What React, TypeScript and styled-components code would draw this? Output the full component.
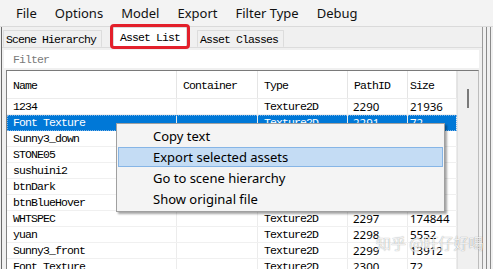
import React from 'react';
import styled, {createGlobalStyle} from "styled-components";

type Asset = {
    name: string;
    type: string;
    pathId: string;
    size: string;
}

const assets: Asset[] = [
    {name: '1234', type: 'Texture2D', pathId: '2290', size: '21936'},
    {name: 'Font Texture', type: 'Texture2D', pathId: '2291', size: '72'},
    {name: 'Sunny3_down', type: 'Texture2D', pathId: '2292', size: '72'},
    {name: 'STONE05', type: 'Texture2D', pathId: '2293', size: '43724'},
    {name: 'sushuini2', type: 'Texture2D', pathId: '2294', size: '87448'},
    {name: 'btnDark', type: 'Texture2D', pathId: '2295', size: '72'},
    {name: 'btnBlueHover', type: 'Texture2D', pathId: '2296', size: '72'},
    {name: 'WHTSPEC', type: 'Texture2D', pathId: '2297', size: '174844'},
    {name: 'yuan', type: 'Texture2D', pathId: '2298', size: '5552'},
    {name: 'Sunny3_front', type: 'Texture2D', pathId: '2299', size: '13912'},
    {name: 'Font Texture', type: 'Texture2D', pathId: '2300', size: '72'},
]

const menus = ['File', 'Options', 'Model', 'Export', 'Filter Type', 'Debug'];
const contextItems = ['Copy text', 'Export selected assets', 'Go to scene hierarchy', 'Show original file'];

const GlobalStyle = createGlobalStyle`
  html, body {
    margin: 0;
    padding: 0;
    background: #f0f0f0;
  }
  body {
    width: 493px;
    height: 269px;
    overflow: hidden;
  }
`

const App = () => {
    return (
        <Window>
            <GlobalStyle/>
            <MenuBar>
                {menus.map(m => <MenuItem key={m}>{m}</MenuItem>)}
            </MenuBar>
            <Main>
                <Pane>
                    <TabStrip>
                        <Tab>Scene Hierarchy</Tab>
                        <Tab $active>Asset List</Tab>
                        <Tab>Asset Classes</Tab>
                    </TabStrip>
                    <TabBody>
                        <FilterBox>Filter</FilterBox>
                        <TableFrame>
                            <Grid>
                                <HeaderRow>
                                    <HeadCell>Name</HeadCell>
                                    <HeadCell>Container</HeadCell>
                                    <HeadCell>Type</HeadCell>
                                    <HeadCell>PathID</HeadCell>
                                    <HeadCell $last>Size</HeadCell>
                                </HeaderRow>
                                {assets.map((a, key) => (
                                    <Row key={key} $selected={key === 1}>
                                        <Cell>{a.name}</Cell>
                                        <Cell></Cell>
                                        <Cell>{a.type}</Cell>
                                        <NumCell>{a.pathId}</NumCell>
                                        <NumCell $last>{a.size}</NumCell>
                                    </Row>
                                ))}
                            </Grid>
                            <ScrollBar>
                                <Thumb/>
                            </ScrollBar>
                        </TableFrame>
                    </TabBody>
                </Pane>
                <Splitter/>
            </Main>
            <ContextMenu>
                {contextItems.map((item, key) => (
                    <ContextItem key={item} $hover={key === 1}>{item}</ContextItem>
                ))}
            </ContextMenu>
            <Watermark>知乎 @旺仔好喝</Watermark>
        </Window>
    );
};

const Window = styled.div`
  position: relative;
  width: 493px;
  height: 269px;
  overflow: hidden;
  display: flex;
  flex-direction: column;
  background: #f0f0f0;
`

const MenuBar = styled.div`
  height: 26px;
  flex-shrink: 0;
  display: flex;
  align-items: center;
  padding-left: 8px;
  background: #f3f3f3;
  border-bottom: 1px solid #dadada;
`

const MenuItem = styled.div`
  font-family: "Noto Sans", sans-serif;
  font-size: 13px;
  color: #111;
  padding: 0 8px;
  margin-right: 2px;
`

const Main = styled.div`
  flex: 1;
  display: flex;
  min-height: 0;
`

const Pane = styled.div`
  margin-left: 1px;
  width: 480px;
  border-left: 1px solid #6a6a6a;
  border-right: 1px solid #9a9a9a;
  display: flex;
  flex-direction: column;
  font-family: "Liberation Mono", monospace;
  font-size: 11.5px;
  letter-spacing: -0.9px;
`

const TabStrip = styled.div`
  height: 20px;
  flex-shrink: 0;
  display: flex;
  align-items: flex-end;
  padding-left: 1px;
`

const Tab = styled.div<{ $active?: boolean }>`
  height: ${p => p.$active ? 18 : 16}px;
  display: flex;
  align-items: center;
  padding: ${p => p.$active ? '0 6px 0 6px' : '0 5px 0 2px'};
  margin: ${p => p.$active ? '0 10px 0 11px' : '0'};
  background: ${p => p.$active ? '#fff' : '#f0f0f0'};
  border: 1px solid #dcdcdc;
  border-bottom: none;
  color: #000;
  outline: ${p => p.$active ? '3px solid #e3202b' : 'none'};
  border-radius: 1px;
  position: relative;
  top: ${p => p.$active ? '-1px' : '0'};
`

const TabBody = styled.div`
  flex: 1;
  display: flex;
  flex-direction: column;
  border-top: 1px solid #dcdcdc;
  padding: 1px 3px 0 2px;
  min-height: 0;
`

const FilterBox = styled.div`
  height: 18px;
  flex-shrink: 0;
  display: flex;
  align-items: center;
  padding-left: 9px;
  background: #fff;
  color: #7a7a7a;
  border-top: 1px solid #f0f0f0;
`

const TableFrame = styled.div`
  margin: 2px 0 0 2px;
  flex: 1;
  display: flex;
  border-top: 1px solid #7a7a7a;
  border-left: 1px solid #828282;
  border-right: 1px solid #bdbdbd;
  background: #fff;
  min-height: 0;
  overflow: hidden;
`

const Grid = styled.div`
  width: 450px;
  display: flex;
  flex-direction: column;
`

const columns = '170px 81px 90px 60px 49px';

const HeaderRow = styled.div`
  height: 27px;
  flex-shrink: 0;
  display: grid;
  grid-template-columns: ${columns};
  border-bottom: 1px solid #ececec;
`

const HeadCell = styled.div<{ $last?: boolean }>`
  display: flex;
  align-items: center;
  padding: 2px 0 0 ${p => p.$last ? 2 : 6}px;
  border-right: 1px solid #e5e5e5;
  color: #000;
`

const Row = styled.div<{ $selected?: boolean }>`
  height: 16px;
  flex-shrink: 0;
  box-sizing: border-box;
  display: grid;
  grid-template-columns: ${columns};
  border-bottom: 1px solid ${p => p.$selected ? '#0078d7' : '#f0f0f0'};
  background: ${p => p.$selected ? '#0078d7' : '#fff'};
  color: ${p => p.$selected ? '#fff' : '#000'};
  outline: ${p => p.$selected ? '1px dotted #7fb3e6' : 'none'};
  outline-offset: -1px;
`

const Cell = styled.div`
  display: flex;
  align-items: center;
  padding-left: 6px;
  border-right: 1px solid #ececec;
  white-space: nowrap;
  overflow: hidden;
`

const NumCell = styled(Cell)<{ $last?: boolean }>`
  padding-left: ${p => p.$last ? 2 : 5}px;
  font-family: "Noto Sans", sans-serif;
  font-size: 11.5px;
  letter-spacing: 0;
`

const ScrollBar = styled.div`
  width: 20px;
  flex-shrink: 0;
  background: #f0f0f0;
  border-left: 1px solid #e2e2e2;
  display: flex;
  flex-direction: column;
  align-items: center;
  padding-top: 18px;
`

const Thumb = styled.div`
  width: 2px;
  height: 19px;
  background: #7a7a7a;
`

const Splitter = styled.div`
  margin-left: 3px;
  width: 3px;
  border-left: 1px solid #8a8a8a;
  border-right: 1px solid #8a8a8a;
`

const ContextMenu = styled.div`
  position: absolute;
  left: 116px;
  top: 123px;
  width: 325px;
  padding: 1px;
  background: #f4f4f4;
  border: 1px solid #a0a0a0;
  box-shadow: 2px 2px 2px rgba(0, 0, 0, 0.35);
  font-family: "Noto Sans", sans-serif;
  font-size: 13px;
`

const ContextItem = styled.div<{ $hover?: boolean }>`
  height: 20px;
  margin: 1px 0;
  display: flex;
  align-items: center;
  padding-left: 34px;
  color: #000;
  box-sizing: border-box;
  background: ${p => p.$hover ? '#c4dcf4' : 'transparent'};
  border: 1px solid ${p => p.$hover ? '#86b5e6' : 'transparent'};
`

const Watermark = styled.div`
  position: absolute;
  left: 376px;
  top: 232px;
  font-family: "Noto Sans CJK SC", sans-serif;
  font-size: 15px;
  color: rgba(255, 255, 255, 0.85);
  text-shadow: 0 0 1px rgba(0, 0, 0, 0.45);
  white-space: nowrap;
`

export default App;
